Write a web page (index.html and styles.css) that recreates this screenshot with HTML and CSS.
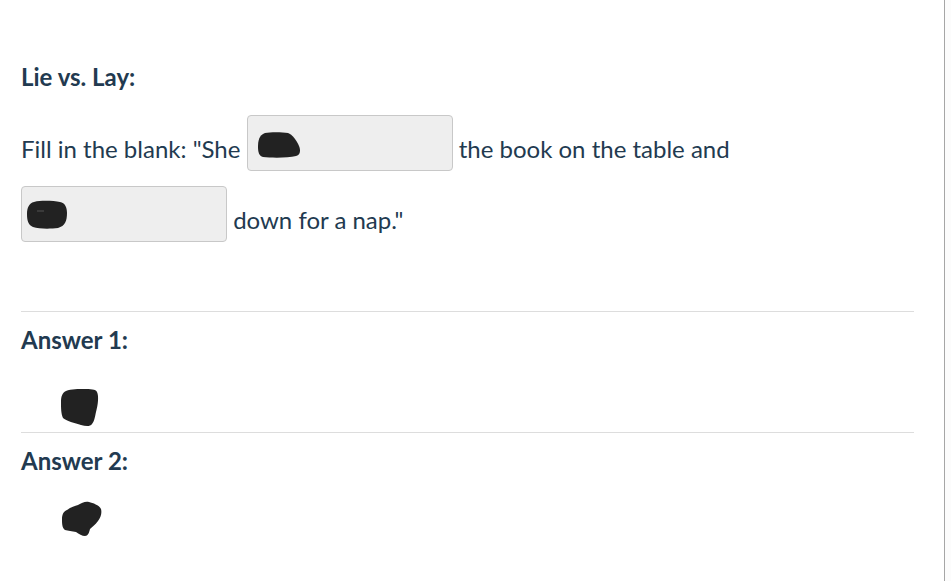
FILE: index.html
```html
<!DOCTYPE html>
<html lang="en">
<head>
<meta charset="utf-8">
<title>Lie vs. Lay</title>
<link rel="stylesheet" href="styles.css">
</head>
<body>
<div class="page">
  <h2 class="question-title">Lie vs. Lay:</h2>
  <p class="question-text">Fill in the blank: "She <span class="blank"><svg class="blank-svg" width="204" height="54" viewBox="0 0 204 54"><path d="M17 17 C22 16 34 16 40 17 C44 18 49 25 51 30 C53 35 52 39 48 40 C40 42 24 42 15 41 C11 40 10 36 10 31 C10 25 11 19 17 17 Z" fill="#222"/></svg></span> the book on the table and <span class="blank"><svg class="blank-svg" width="204" height="54" viewBox="0 0 204 54"><path d="M12 15 C20 13 32 14 38 15 C43 16 45 20 45 26 C45 34 43 39 36 41 C28 42 17 42 11 40 C6 38 5 33 5 27 C5 21 7 16 12 15 Z" fill="#222"/><path d="M15 24 L22 24" stroke="#777" stroke-width="0.6"/></svg></span> down for a nap."</p>

  <div class="answer">
    <h3 class="answer-label">Answer 1:</h3>
    <div class="answer-value">
      <svg width="110" height="77" viewBox="0 0 110 77"><path d="M45 36 C50 34 58 34 63 34 C69 34 75 34 76 37 C78 41 77 50 75 57 C74 62 73 67 71 69 C69 72 64 71 60 70 C54 68 45 66 42 63 C40 59 40 52 40 47 C40 42 41 38 45 36 Z" fill="#222"/></svg>
    </div>
  </div>

  <div class="answer">
    <h3 class="answer-label">Answer 2:</h3>
    <div class="answer-value">
      <svg width="110" height="77" viewBox="0 0 110 77"><path d="M41 44 C41 39 43 36 46 35 C50 32 54 31 57 30 C61 28 64 26 68 27 C72 28 78 30 80 34 C81 38 80 42 77 46 C74 50 71 52 69 54 C68 58 67 61 64 61 C61 61 58 59 55 57 C51 56 47 56 44 55 C41 53 41 48 41 44 Z" fill="#222"/></svg>
    </div>
  </div>
</div>
</body>
</html>
```

FILE: styles.css
```css
html, body {
  margin: 0;
  padding: 0;
}

body {
  background: #fcfcfc;
  font-family: Lato, "Noto Sans", "Liberation Sans", sans-serif;
  color: #223a50;
}

.page {
  box-sizing: border-box;
  width: 945px;
  min-height: 581px;
  background: #ffffff;
  border-right: 1px solid #a6a6a6;
  padding: 63px 30px 0 21px;
}

.question-title {
  margin: 0;
  font-size: 24px;
  line-height: 1.2;
  font-weight: 700;
}

.question-text {
  margin: 16px 0 0;
  font-size: 24px;
  line-height: 1.2;
}

.blank {
  display: inline-block;
  box-sizing: border-box;
  width: 206px;
  height: 56px;
  margin: 7px 0 8px;
  vertical-align: -21px;
  background: #eeeeee;
  border: 1px solid #c8c8c8;
  border-radius: 4px;
}

.blank-svg {
  display: block;
}

.answer {
  border-top: 1px solid #dddddd;
  padding-top: 14px;
}

.answer:first-of-type {
  margin-top: 61px;
}

.answer-label {
  margin: 0;
  font-size: 24px;
  line-height: 1.2;
  font-weight: 700;
}

.answer-value {
  height: 77px;
}

.answer-value svg {
  display: block;
}
```
